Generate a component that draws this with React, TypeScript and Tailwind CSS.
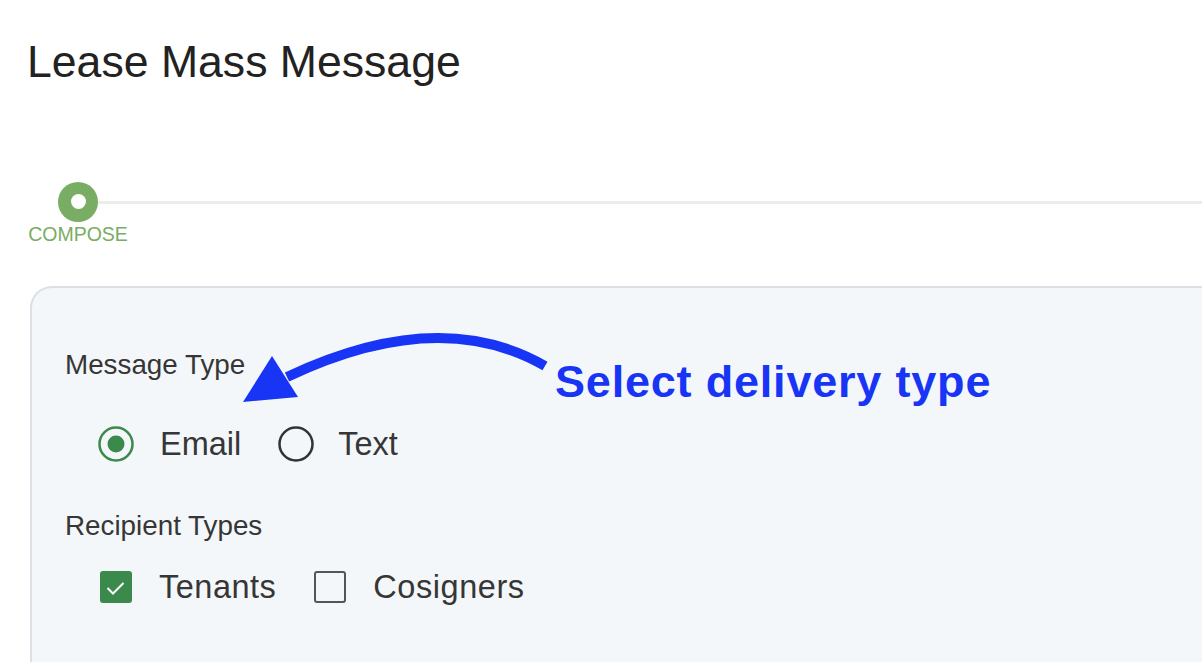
import React from "react";

function RadioIcon({ checked }: { checked: boolean }) {
  return (
    <svg width="36" height="36" viewBox="0 0 36 36" className="shrink-0">
      <circle
        cx="18"
        cy="18"
        r="16.5"
        fill="none"
        stroke={checked ? "#3b8a4b" : "#333333"}
        strokeWidth="2.5"
      />
      {checked && <circle cx="18" cy="18" r="8.5" fill="#3b8a4b" />}
    </svg>
  );
}

function CheckIcon({ checked }: { checked: boolean }) {
  if (checked) {
    return (
      <div className="w-[32px] h-[32px] rounded-[3px] bg-[#3b8a4b] flex items-center justify-center shrink-0">
        <svg width="32" height="32" viewBox="0 0 32 32">
          <path d="M7.5 17 L13 22.5 L23.5 12" fill="none" stroke="#ffffff" strokeWidth="2" />
        </svg>
      </div>
    );
  }
  return <div className="w-[32px] h-[32px] rounded-[3px] border-2 border-[#555555] shrink-0" />;
}

export default function App() {
  return (
    <div
      className="relative w-full h-[662px] overflow-hidden bg-white"
      style={{ fontFamily: '"Liberation Sans", Arial, sans-serif' }}
    >
      <h1 className="pl-[27px] pt-[40px] text-[44.6px] leading-none text-[#222222] font-normal">
        Lease Mass Message
      </h1>

      {/* Stepper */}
      <div className="flex items-start pl-[28px] mt-[97.4px]">
        <div className="w-[100px] flex flex-col items-center shrink-0">
          <div className="w-[40px] h-[40px] rounded-full bg-[#79ad63] flex items-center justify-center">
            <div className="w-[15px] h-[15px] rounded-full bg-white" />
          </div>
          <div className="mt-[3.5px] text-[19.5px] leading-none text-[#79ad63]">COMPOSE</div>
        </div>
        <div className="flex-1 h-[3px] bg-[#ececea] mt-[19px] -ml-[30px]" />
      </div>

      {/* Card */}
      <div className="ml-[30px] mt-[41px] rounded-tl-[22px] border-t-2 border-l-2 border-[#dcdfe4] bg-[#f4f7fa] h-[400px] pl-[33px] pt-[63.5px] text-[#363636]">
        <div className="text-[27.8px] leading-none">Message Type</div>
        <div className="flex items-center mt-[47.2px] pl-[33px] h-[36px]">
          <RadioIcon checked />
          <span className="ml-[26px] text-[32.5px] leading-none">Email</span>
          <span className="ml-[37px]">
            <RadioIcon checked={false} />
          </span>
          <span className="ml-[24px] text-[32.5px] leading-none">Text</span>
        </div>
        <div className="mt-[49.2px] text-[27.8px] leading-none">Recipient Types</div>
        <div className="flex items-center mt-[31.5px] pl-[35px] h-[32px]">
          <CheckIcon checked />
          <span className="ml-[27px] text-[32.5px] leading-none tracking-[0.5px]">Tenants</span>
          <span className="ml-[38px]">
            <CheckIcon checked={false} />
          </span>
          <span className="ml-[27px] text-[32.5px] leading-none tracking-[0.55px]">Cosigners</span>
        </div>
      </div>

      {/* Annotation overlay */}
      <svg
        className="absolute left-0 top-0 pointer-events-none"
        width="1202"
        height="662"
        viewBox="0 0 1202 662"
      >
        <path d="M545 366 Q439 305 287 377" fill="none" stroke="#1835f5" strokeWidth="10" />
        <polygon points="243,402 272,356 298,397" fill="#1835f5" />
      </svg>
      <div className="absolute left-[555px] top-[359px] text-[45px] leading-none font-bold tracking-[0.8px] text-[#1835f5] whitespace-nowrap">
        Select delivery type
      </div>
    </div>
  );
}
